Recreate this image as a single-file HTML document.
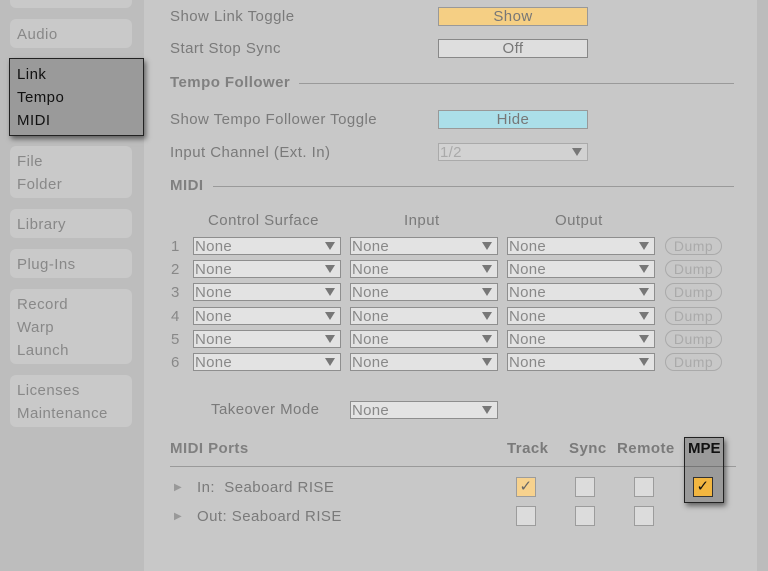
<!DOCTYPE html><html><head><style>
body{margin:0;width:768px;height:571px;overflow:hidden;background:#c8c8c8;font-family:"Liberation Sans",sans-serif;position:relative;color:#7a7a7a;font-size:15px;letter-spacing:.45px}
.a{position:absolute}
#side{left:0;top:0;width:144px;height:571px;background:#bdbdbd}
.btn{position:absolute;left:10px;width:122px;background:#c9c9c9;border-radius:6px;color:#888;font-size:15px;line-height:23px;padding:4px 7px;box-sizing:border-box}
#sel{left:9px;top:58px;width:135px;height:78px;background:#9a9a9a;border:1.5px solid #222;box-shadow:2px 3px 5px rgba(0,0,0,.5);color:#111;line-height:23px;padding:4px 7px;box-sizing:border-box}
.lbl{position:absolute;left:170px;font-size:15px}
.box{position:absolute;left:438px;width:150px;height:19px;border:1px solid #888;box-sizing:border-box;text-align:center;line-height:17px;color:#777;background:#dedede}
.hr{position:absolute;height:1px;background:#9a9a9a}
.dd{position:absolute;width:148px;height:18px;border:1px solid #8e8e8e;background:#e3e3e3;box-sizing:border-box;line-height:17px;padding-left:1px;color:#888;font-size:15px;letter-spacing:.3px}
.dd:after{content:"";position:absolute;right:5px;top:4px;border-left:5px solid transparent;border-right:5px solid transparent;border-top:8px solid #777}
.dump{position:absolute;left:665px;width:57px;height:18px;border:1px solid #aaa;border-radius:9px;box-sizing:border-box;color:#aaa;text-align:center;line-height:16px;font-size:14px}
.num{position:absolute;left:171px;color:#888}
.cb{position:absolute;width:20px;height:20px;border:1px solid #9c9c9c;background:#dcdcdc;box-sizing:border-box}
</style></head><body>
<div class="a" id="side"></div>
<div class="btn" style="top:-10px;height:18px"></div>
<div class="btn" style="top:19px;height:29px">Audio</div>
<div class="a" id="sel">Link<br>Tempo<br>MIDI</div>
<div class="btn" style="top:146px;height:52px">File<br>Folder</div>
<div class="btn" style="top:209px;height:29px">Library</div>
<div class="btn" style="top:249px;height:29px">Plug-Ins</div>
<div class="btn" style="top:289px;height:75px">Record<br>Warp<br>Launch</div>
<div class="btn" style="top:375px;height:52px">Licenses<br>Maintenance</div>
<div class="a" style="left:757px;top:0;width:11px;height:571px;background:#bcbcbc"></div>

<div class="lbl" style="top:8px">Show Link Toggle</div>
<div class="box" style="top:7px;background:#f5cf84;border-color:#999">Show</div>
<div class="lbl" style="top:40px">Start Stop Sync</div>
<div class="box" style="top:39px">Off</div>
<div class="lbl" style="top:74px;font-weight:bold;color:#808080">Tempo Follower</div>
<div class="hr" style="left:299px;top:83px;width:435px"></div>
<div class="lbl" style="top:111px">Show Tempo Follower Toggle</div>
<div class="box" style="top:110px;background:#abdfe9;border-color:#999">Hide</div>
<div class="lbl" style="top:144px">Input Channel (Ext. In)</div>
<div class="dd" style="left:438px;top:143px;width:150px;color:#aaa;border-color:#aaa;background:#d2d2d2">1/2</div>
<div class="lbl" style="top:177px;font-weight:bold;color:#808080">MIDI</div>
<div class="hr" style="left:213px;top:186px;width:521px"></div>
<div class="a" style="left:208px;top:212px">Control Surface</div>
<div class="a" style="left:404px;top:212px">Input</div>
<div class="a" style="left:555px;top:212px">Output</div>

<div id="rows"></div>
<script>
var h="";for(var i=0;i<6;i++){var t=237+i*23.2;h+='<div class="num" style="top:'+(t+1)+'px">'+(i+1)+'</div><div class="dd" style="left:193px;top:'+t+'px">None</div><div class="dd" style="left:350px;top:'+t+'px">None</div><div class="dd" style="left:507px;top:'+t+'px">None</div><div class="dump" style="top:'+t+'px">Dump</div>';}
document.getElementById("rows").innerHTML=h;
</script>
<div class="a" style="left:211px;top:401px">Takeover Mode</div>
<div class="dd" style="left:350px;top:401px">None</div>

<div class="lbl" style="top:440px;font-weight:bold;color:#808080">MIDI Ports</div>
<div class="a" style="left:507px;top:440px;font-weight:bold">Track</div>
<div class="a" style="left:569px;top:440px;font-weight:bold">Sync</div>
<div class="a" style="left:617px;top:440px;font-weight:bold">Remote</div>
<div class="hr" style="left:170px;top:466px;width:566px"></div>
<div class="a" style="left:684px;top:437px;width:40px;height:66px;background:#9a9a9a;border:1.5px solid #222;box-shadow:2px 3px 5px rgba(0,0,0,.5);box-sizing:border-box"></div>
<div class="a" style="left:688px;top:440px;font-weight:bold;color:#111;letter-spacing:0">MPE</div>
<div class="a" style="left:685px;top:466px;width:38px;height:1px;background:#777"></div>
<div class="a" style="left:174px;top:482px;font-size:10px;color:#999">▶</div>
<div class="a" style="left:174px;top:511px;font-size:10px;color:#999">▶</div>
<div class="a" style="left:197px;top:479px">In:&nbsp;&nbsp;Seaboard RISE</div>
<div class="a" style="left:197px;top:508px">Out: Seaboard RISE</div>
<div class="cb" style="left:516px;top:477px;background:#f7d28e;color:#666;font-size:15px;line-height:18px;text-align:center">✓</div>
<div class="cb" style="left:575px;top:477px"></div>
<div class="cb" style="left:634px;top:477px"></div>
<div class="cb" style="left:693px;top:477px;background:#f2b640;border-color:#333;color:#111;font-size:15px;line-height:18px;text-align:center">✓</div>
<div class="cb" style="left:516px;top:506px"></div>
<div class="cb" style="left:575px;top:506px"></div>
<div class="cb" style="left:634px;top:506px"></div>
</body></html>
